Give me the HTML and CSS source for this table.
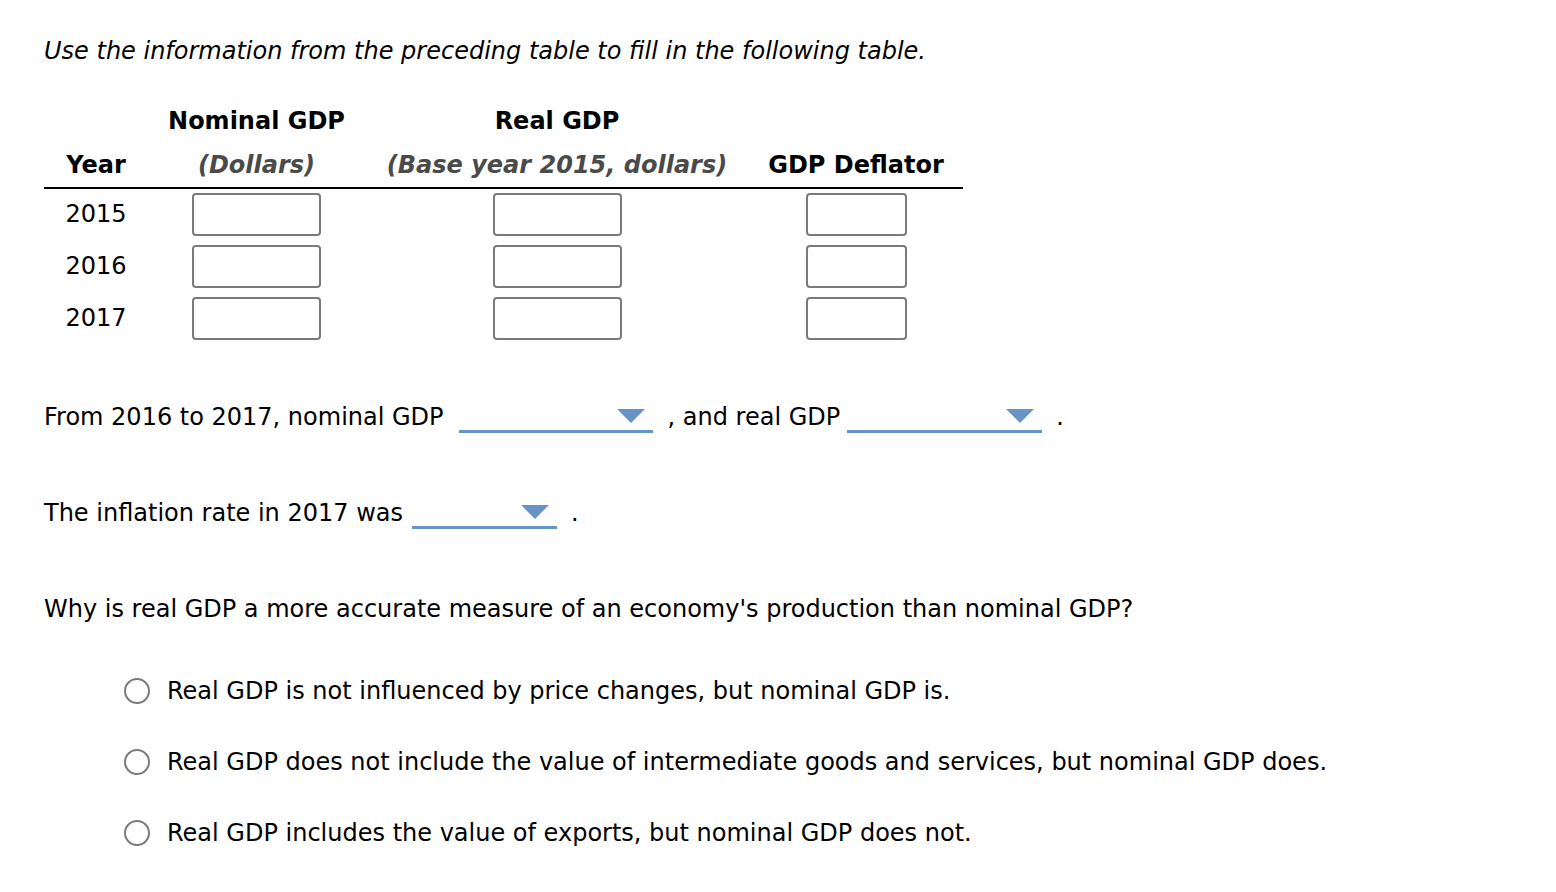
FILE: index.html
```html
<!DOCTYPE html>
<html>
<head>
<meta charset="utf-8">
<link rel="stylesheet" href="styles.css">
</head>
<body>
<div class="page">
  <p class="intro">Use the information from the preceding table to fill in the following table.</p>

  <table class="gdp">
    <thead>
      <tr class="head1">
        <th class="c-year"></th>
        <th class="c-nom">Nominal GDP</th>
        <th class="c-real">Real GDP</th>
        <th class="c-def"></th>
      </tr>
      <tr class="head2">
        <th class="c-year">Year</th>
        <th class="c-nom sub">(Dollars)</th>
        <th class="c-real sub">(Base year 2015, dollars)</th>
        <th class="c-def">GDP Deflator</th>
      </tr>
    </thead>
    <tbody>
      <tr>
        <td class="c-year"><span class="yr">2015</span></td>
        <td class="c-nom"><span class="box wide"></span></td>
        <td class="c-real"><span class="box wide"></span></td>
        <td class="c-def"><span class="box narrow"></span></td>
      </tr>
      <tr>
        <td class="c-year"><span class="yr">2016</span></td>
        <td class="c-nom"><span class="box wide"></span></td>
        <td class="c-real"><span class="box wide"></span></td>
        <td class="c-def"><span class="box narrow"></span></td>
      </tr>
      <tr>
        <td class="c-year"><span class="yr">2017</span></td>
        <td class="c-nom"><span class="box wide"></span></td>
        <td class="c-real"><span class="box wide"></span></td>
        <td class="c-def"><span class="box narrow"></span></td>
      </tr>
    </tbody>
  </table>

  <div class="sentence s1">
    <span>From 2016 to 2017, nominal GDP</span>
    <span class="select w194 gap-wide"><span class="tri"></span></span>
    <span class="after-comma">, and real GDP</span>
    <span class="select w195"><span class="tri"></span></span>
    <span class="dot">.</span>
  </div>

  <div class="sentence s2">
    <span>The inflation rate in 2017 was</span>
    <span class="select w145 gap-mid"><span class="tri"></span></span>
    <span class="dot">.</span>
  </div>

  <p class="question">Why is real GDP a more accurate measure of an economy's production than nominal GDP?</p>

  <ul class="options">
    <li><span class="radio"></span><span>Real GDP is not influenced by price changes, but nominal GDP is.</span></li>
    <li><span class="radio"></span><span>Real GDP does not include the value of intermediate goods and services, but nominal GDP does.</span></li>
    <li><span class="radio"></span><span>Real GDP includes the value of exports, but nominal GDP does not.</span></li>
  </ul>
</div>
</body>
</html>
```

FILE: styles.css
```css
html, body {
  margin: 0;
  padding: 0;
  background: #fff;
}

.page {
  padding: 37px 44px 0 44px;
  font-family: "DejaVu Sans", Verdana, sans-serif;
  font-size: 24px;
  color: #000;
}

.intro {
  margin: 0;
  font-style: italic;
  line-height: 28px;
}

.gdp {
  margin-top: 34px;
  border-collapse: collapse;
  border-spacing: 0;
}

.gdp th,
.gdp td {
  padding: 0;
  text-align: center;
  vertical-align: middle;
}

.c-year { width: 104px; }
.c-nom { width: 217px; }
.c-real { width: 384px; }
.c-def { width: 214px; }

.head1 th {
  height: 44px;
  font-weight: bold;
}

.head2 th {
  height: 44px;
  font-weight: bold;
  border-bottom: 2px solid #000;
}

.head2 th.sub {
  font-style: italic;
  color: #4a4a4a;
}

.gdp tbody td {
  box-sizing: border-box;
  height: 52px;
  padding-top: 4px;
  padding-bottom: 5px;
  vertical-align: top;
  line-height: 43px;
}

.box {
  display: inline-block;
  box-sizing: border-box;
  height: 43px;
  border: 2px solid #7a7a7a;
  border-radius: 4px;
  vertical-align: top;
  background: #fff;
}

.box.wide { width: 129px; }
.box.narrow { width: 101px; }

.sentence {
  display: flex;
  align-items: center;
  line-height: 28px;
}

.s1 {
  margin-top: 55px;
}

.s2 {
  margin-top: 63px;
}

.select {
  box-sizing: border-box;
  height: 33px;
  border-bottom: 3px solid #6793c7;
  margin-left: 7px;
  display: flex;
  justify-content: flex-end;
  align-items: flex-start;
  padding-right: 8px;
  padding-top: 9px;
}

.select.gap-wide { margin-left: 15px; }
.select.gap-mid { margin-left: 9px; }

.w194 { width: 194px; }
.w195 { width: 195px; }
.w145 { width: 145px; }

.tri {
  width: 0;
  height: 0;
  border-left: 14px solid transparent;
  border-right: 14px solid transparent;
  border-top: 14px solid #6793c7;
}

.after-comma {
  margin-left: 15px;
}

.dot {
  margin-left: 14px;
}

.question {
  margin: 66px 0 0 0;
  line-height: 28px;
}

.options {
  list-style: none;
  margin: 32px 0 0 0;
  padding: 0 0 0 80px;
}

.options li {
  display: flex;
  align-items: center;
  height: 71px;
  line-height: 28px;
}

.radio {
  box-sizing: border-box;
  width: 26px;
  height: 26px;
  border: 2px solid #7a7a7a;
  border-radius: 50%;
  margin-right: 17px;
  flex: none;
}
```
